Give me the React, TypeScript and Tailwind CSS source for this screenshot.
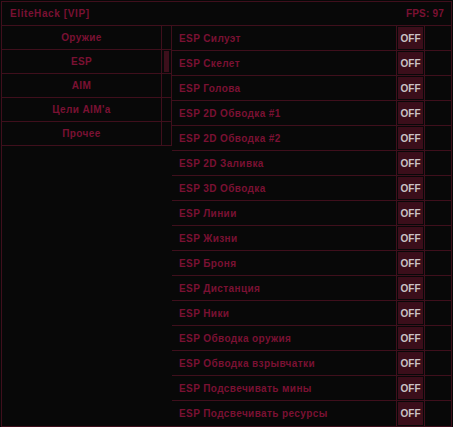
import { FC } from "react";

const tabs = ["Оружие", "ESP", "AIM", "Цели AIM'а", "Прочее"];

const options = [
  "ESP Силуэт",
  "ESP Скелет",
  "ESP Голова",
  "ESP 2D Обводка #1",
  "ESP 2D Обводка #2",
  "ESP 2D Заливка",
  "ESP 3D Обводка",
  "ESP Линии",
  "ESP Жизни",
  "ESP Броня",
  "ESP Дистанция",
  "ESP Ники",
  "ESP Обводка оружия",
  "ESP Обводка взрывчатки",
  "ESP Подсвечивать мины",
  "ESP Подсвечивать ресурсы",
];

const App: FC = () => {
  const active = 1;

  return (
    <div className="w-[453px] h-[427px] bg-[#070707] pt-px pl-px overflow-hidden font-['Liberation_Sans',Arial,sans-serif] text-[10px] font-bold text-[#7a1133]">
      <div className="w-[451px] border border-[#3f0f1c] bg-[#080808]">
        <div className="h-[24px] flex items-center justify-between pl-[8px] pr-[7px] border-b border-[#3f0f1c]">
          <span className="tracking-[0.6px]">EliteHack [VIP]</span>
          <span className="tracking-[0.2px]">FPS: 97</span>
        </div>
        <div className="flex">
          <div className="w-[170px] self-start border-r border-[#3f0f1c]">
            {tabs.map((t, i) => (
              <div key={t} className="flex h-[24px] border-b border-[#3f0f1c]">
                <div className="w-[160px] flex items-center justify-center border-r border-[#3f0f1c] tracking-[0.4px]">
                  {t}
                </div>
                <div className="flex-1 p-px">
                  {i === active && <div className="h-full mx-px bg-[#3c0f1b]" />}
                </div>
              </div>
            ))}
          </div>
          <div className="flex-1">
            {options.map((o) => (
              <div key={o} className="flex h-[25px] border-b border-[#3f0f1c] last:border-b-0">
                <div className="flex-1 flex items-center pl-[7px] border-r border-[#3f0f1c] tracking-[0.4px]">
                  {o}
                </div>
                <div className="w-[28px] p-px border-r border-[#3f0f1c]">
                  <div className="h-full flex items-center justify-center bg-[#3b0e1a] text-[#cac3c5]">
                    OFF
                  </div>
                </div>
                <div className="w-[26px]" />
              </div>
            ))}
          </div>
        </div>
      </div>
    </div>
  );
};

export default App;
